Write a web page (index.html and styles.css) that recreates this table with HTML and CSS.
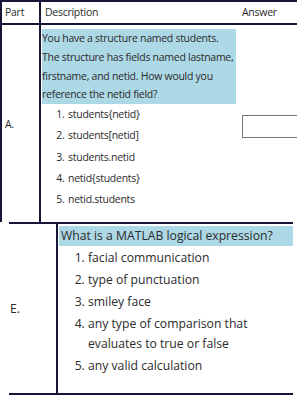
FILE: index.html
```html
<!DOCTYPE html>
<html>
<head>
<meta charset="utf-8">
<link rel="stylesheet" href="styles.css">
</head>
<body>
<div class="t1">
  <div class="row head">
    <div class="part">Part</div>
    <div class="desc">Description</div>
    <div class="ans">Answer</div>
  </div>
  <div class="row body1">
    <div class="part center">A.</div>
    <div class="desc">
      <div class="hl hl1">You have a structure named students.<br>The structure has fields named lastname,<br>firstname, and netid. How would you<br>reference the netid field?</div>
      <ol class="list1">
        <li>students{netid}</li>
        <li>students[netid]</li>
        <li>students.netid</li>
        <li>netid{students}</li>
        <li>netid.students</li>
      </ol>
    </div>
    <div class="ans center-ans"><div class="input"></div></div>
  </div>
</div>
<div class="t2">
  <div class="part2">E.</div>
  <div class="desc2">
    <div class="hl hl2">What is a MATLAB logical expression?</div>
    <ol class="list2">
      <li>facial communication</li>
      <li>type of punctuation</li>
      <li>smiley face</li>
      <li>any type of comparison that evaluates to true or false</li>
      <li>any valid calculation</li>
    </ol>
  </div>
</div>
</body>
</html>
```
FILE: styles.css
```css
html, body {
  margin: 0;
  padding: 0;
  background: #fff;
  overflow: hidden;
}
body {
  width: 297px;
  font-family: "Open Sans", "Noto Sans", sans-serif;
  color: #2b2b2b;
}
.t1 {
  border-top: 2px solid #16163a;
  border-left: 2px solid #16163a;
  font-size: 10.5px;
  letter-spacing: -0.27px;
}
.row {
  display: grid;
  grid-template-columns: 39px 197px 1fr;
}
.part {
  border-right: 2px solid #16163a;
  padding-left: 3px;
}
.head {
  height: 21px;
  line-height: 21px;
  border-bottom: 2px solid #16163a;
}
.head .desc {
  padding-left: 4px;
}
.head .ans {
  padding-left: 4px;
}
.center {
  display: flex;
  align-items: center;
}
.body1 .desc {
  padding: 4px 0 12px 1px;
}
.hl {
  background: #add8e6;
}
.hl1 {
  width: 194px;
  line-height: 18.75px;
  white-space: nowrap;
}
.list1 {
  margin: 0;
  padding-left: 25px;
}
.list1 li {
  line-height: 21.3px;
  padding-left: 1px;
}
.center-ans {
  display: flex;
  align-items: center;
  padding-left: 4px;
  padding-top: 6px;
}
.input {
  height: 21px;
  flex: 1;
  border: 1px solid #777;
  border-right: none;
}
.t2 {
  margin-left: 9px;
  width: 284px;
  border-top: 2px solid #16163a;
  border-bottom: 2px solid #16163a;
  display: flex;
  font-size: 12.2px;
}
.part2 {
  width: 46px;
  border-right: 2px solid #16163a;
  padding-left: 1px;
  display: flex;
  align-items: center;
}
.desc2 {
  flex: 1;
  padding: 2px 0 16px 1px;
}
.hl2 {
  line-height: 20px;
  padding-left: 2px;
}
.list2 {
  margin: 0;
  padding-left: 29px;
}
.list2 li {
  line-height: 20.5px;
  margin-top: 1.5px;
}
```
